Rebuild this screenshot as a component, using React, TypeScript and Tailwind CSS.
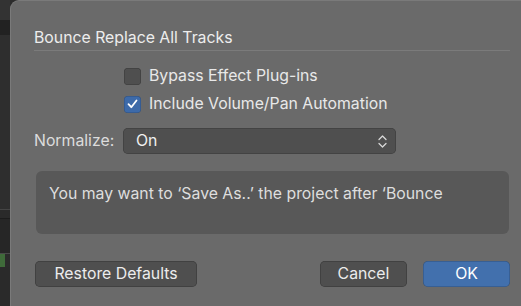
import React from "react";

function Checkbox({ checked }: { checked: boolean }) {
  if (checked) {
    return (
      <div className="w-[17px] h-[17px] rounded-[4px] bg-[#3d6aa9] flex items-center justify-center shadow-[inset_0_0_0_0.5px_rgba(0,0,0,0.25)]">
        <svg width="11" height="10" viewBox="0 0 11 10" fill="none">
          <path d="M1.5 5.2 L4.3 8.2 L9.5 1.5" stroke="#ffffff" strokeWidth="1.8" strokeLinecap="round" strokeLinejoin="round" />
        </svg>
      </div>
    );
  }
  return <div className="w-[17px] h-[17px] rounded-[4px] bg-[#4f4f4f] shadow-[inset_0_0_0_0.5px_rgba(0,0,0,0.3)]" />;
}

function Chevrons() {
  return (
    <svg width="9" height="15" viewBox="0 0 9 15" fill="none">
      <path d="M1 5.5 L4.5 2 L8 5.5" stroke="#d8d8d8" strokeWidth="1.3" strokeLinecap="round" strokeLinejoin="round" />
      <path d="M1 9.5 L4.5 13 L8 9.5" stroke="#d8d8d8" strokeWidth="1.3" strokeLinecap="round" strokeLinejoin="round" />
    </svg>
  );
}

export default function App() {
  return (
    <div
      className="w-[521px] h-[306px] flex bg-[#2c2c2c] overflow-hidden text-[#e8e8e8]"
      style={{ fontFamily: "Inter, 'Noto Sans', 'Liberation Sans', sans-serif" }}
    >
      {/* app window behind the sheet */}
      <div className="w-[10px] flex flex-col shrink-0">
        <div className="h-[20px] bg-[#333333]" />
        <div className="h-[15px] bg-[#222222]" />
        <div className="h-[174px] bg-[#2e2e2e]" />
        <div className="h-px bg-[#454545]" />
        <div className="h-[8px] bg-[#2a2a2a]" />
        <div className="h-px bg-[#1c1c1c]" />
        <div className="h-[34px] bg-[#262626]" />
        <div className="h-px bg-[#4a4a4a]" />
        <div className="h-[13px] bg-[#2b2b2b] flex">
          <div className="w-[5px] bg-[#3f6b3a]" />
        </div>
        <div className="flex-1 bg-[#2a2a2a]" />
      </div>

      {/* bounce dialog */}
      <div className="flex-1 bg-[#6a6a6a] rounded-tl-[9px] border-t border-l border-[#7a7a7a] pl-[23px] pr-[11px] flex flex-col text-[15.8px] leading-[20px]">
        <div className="mt-[27px] text-[#ededed]">Bounce Replace All Tracks</div>
        <div className="mt-[2px] h-px bg-[#7b7b7b]" />

        <div className="mt-[15px] ml-[90px] flex items-center gap-[8px] h-[20px]">
          <Checkbox checked={false} />
          <span>Bypass Effect Plug-ins</span>
        </div>
        <div className="mt-[8px] ml-[90px] flex items-center gap-[8px] h-[20px]">
          <Checkbox checked={true} />
          <span>Include Volume/Pan Automation</span>
        </div>

        <div className="mt-[14px] flex items-center h-[26px]">
          <span className="w-[89px] text-[#dcdcdc]">Normalize:</span>
          <div className="w-[273px] h-[26px] rounded-[5px] bg-[#4f4f4f] flex items-center justify-between pl-[13px] pr-[9px] shadow-[inset_0_0_0_0.5px_rgba(0,0,0,0.3)]">
            <span className="text-[#f0f0f0]">On</span>
            <Chevrons />
          </div>
        </div>

        <div className="mt-[17px] ml-[2px] mr-px h-[63px] rounded-[6px] bg-[#585858] pl-[13px] pt-[13px] text-[#dedede] whitespace-nowrap">
          You may want to ‘Save As..’ the project after ‘Bounce
        </div>

        <div className="mt-[27px] flex items-center h-[26px]">
          <button className="ml-px w-[162px] h-[26px] rounded-[5px] bg-[#4f4f4f] text-[#ececec] shadow-[inset_0_0_0_0.5px_rgba(0,0,0,0.35)]">
            Restore Defaults
          </button>
          <div className="flex-1" />
          <button className="w-[87px] h-[26px] rounded-[5px] bg-[#4f4f4f] text-[#ececec] shadow-[inset_0_0_0_0.5px_rgba(0,0,0,0.35)]">
            Cancel
          </button>
          <button className="ml-[16px] w-[87px] h-[26px] rounded-[5px] bg-[#4270ad] text-white shadow-[inset_0_0_0_0.5px_rgba(0,0,0,0.3)]">
            OK
          </button>
        </div>
      </div>
    </div>
  );
}
